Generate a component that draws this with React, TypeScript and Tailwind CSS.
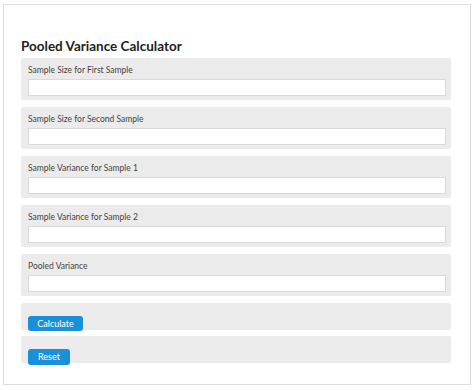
const fields = [
  "Sample Size for First Sample",
  "Sample Size for Second Sample",
  "Sample Variance for Sample 1",
  "Sample Variance for Sample 2",
  "Pooled Variance",
];

export default function App() {
  return (
    <div className="w-[474px] h-[390px] bg-white pt-[4px] pl-[3px] font-['Lato',sans-serif]">
      <div className="w-[468px] h-[381px] border border-[#dedede] pl-[17px] pt-[32px]">
        <h1 className="text-[13.5px] leading-[18px] font-bold text-[#222] mb-[3px]">
          Pooled Variance Calculator
        </h1>

        <div className="flex flex-col gap-[7px] w-[430px]">
          {fields.map((label) => (
            <div key={label} className="bg-[#ebebeb] rounded-[2px] pt-[6px] pb-[4px] pl-[7px] pr-[5px]">
              <label className="block text-[8.5px] leading-[12px] text-[#444] mb-[3px]">{label}</label>
              <input
                type="text"
                className="block w-full h-[17px] bg-white border border-[#dadada] outline-none"
              />
            </div>
          ))}

          <div className="bg-[#ebebeb] rounded-[2px] h-[27px] pl-[7px] pt-[6px]">
            <button className="h-[15px] w-[55px] rounded-[3px] bg-[#1a90d9] text-white text-[9px] leading-[15px]">
              Calculate
            </button>
          </div>
          <div className="bg-[#ebebeb] rounded-[2px] h-[27px] pl-[7px] pt-[6px] -mt-[1px]">
            <button className="h-[16px] w-[42px] rounded-[3px] bg-[#1a90d9] text-white text-[9px] leading-[16px]">
              Reset
            </button>
          </div>
        </div>
      </div>
    </div>
  );
}
